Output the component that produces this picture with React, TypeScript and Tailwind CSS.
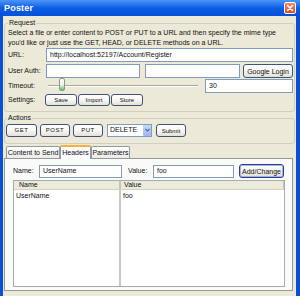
import React from "react";

const btn =
  "flex items-center justify-center border border-[#3D5378] rounded-[3px] bg-gradient-to-b from-white via-[#F7F6F2] to-[#E3E1D6] text-[#111] leading-none";
const input =
  "h-[14px] border border-[#7F9DB9] bg-white pl-[3px] flex items-center whitespace-nowrap overflow-hidden";

export default function App() {
  return (
    <div className="w-[300px] h-[296px] overflow-hidden bg-[#0A4FD4] flex flex-col font-['Liberation_Sans',Arial,sans-serif] text-[7px] leading-[10px] text-[#111]">
      {/* title bar */}
      <div className="h-[16px] shrink-0 flex items-center justify-between bg-gradient-to-b from-[#4A96F8] via-[#0C5DE4] to-[#0650D8] pl-[4px] pr-[4px]">
        <span className="text-white font-bold text-[9px] leading-[10px] tracking-[0.2px]">Poster</span>
        <div className="w-[12px] h-[12px] rounded-[2px] border border-white bg-gradient-to-b from-[#EE8A6A] to-[#D8441F] flex items-center justify-center">
          <svg width="8" height="8" viewBox="0 0 8 8">
            <path d="M1.5 1.5 L6.5 6.5 M6.5 1.5 L1.5 6.5" stroke="white" strokeWidth="1.6" strokeLinecap="round" />
          </svg>
        </div>
      </div>

      {/* body */}
      <div className="flex-1 ml-[3px] mr-[4px] bg-[#ECE9D8] flex flex-col px-[1px]">
        {/* Request group */}
        <fieldset className="mt-[2px] border border-[#D0D0BF] rounded-[3px] pl-[3px] pr-[1px] pb-[5px]">
          <legend className="px-[1px] leading-[10px]">Request</legend>
          <div className="h-[20px] whitespace-nowrap leading-[10px]">
            Select a file or enter content to POST or PUT to a URL and then specify the mime type
            <br />
            you'd like or just use the GET, HEAD, or DELETE methods on a URL.
          </div>
          <div className="flex items-center h-[14px]">
            <span className="w-[38px] shrink-0">URL:</span>
            <div className={`flex-1 ${input}`}>http://localhost:52197/Account/Register</div>
          </div>
          <div className="flex items-center h-[14px] mt-[2px]">
            <span className="w-[38px] shrink-0">User Auth:</span>
            <div className={`w-[94px] ${input}`}></div>
            <div className={`w-[95px] ml-[5px] ${input}`}></div>
            <div className={`${btn} flex-1 h-[14px] ml-[3px] text-[7px]`}>Google Login</div>
          </div>
          <div className="flex items-center h-[14px] mt-[1px]">
            <span className="w-[38px] shrink-0">Timeout:</span>
            <div className="relative w-[159px] h-[14px] flex items-center">
              <div className="ml-[2px] w-[150px] h-[2px] border-t border-[#A7A6A0] bg-white" />
              <div className="absolute left-[13px] top-[-1px] w-[6px] h-[13px] rounded-[2px] border border-[#8A9A8A] bg-gradient-to-b from-white via-[#F2F2EC] to-[#5FC05F]" />
            </div>
            <div className={`flex-1 ${input}`}>30</div>
          </div>
          <div className="flex items-center h-[12px] mt-[1px]">
            <span className="w-[37px] shrink-0">Settings:</span>
            <div className={`${btn} w-[32px] h-[12px] text-[6px]`}>Save</div>
            <div className={`${btn} w-[32px] h-[12px] ml-[1px] text-[6px]`}>Import</div>
            <div className={`${btn} w-[32px] h-[12px] ml-[1px] text-[6px]`}>Store</div>
          </div>
        </fieldset>

        {/* Actions group */}
        <fieldset className="mt-[1px] border border-[#D0D0BF] rounded-[3px] pl-[1px] pr-[1px] pb-[6px]">
          <legend className="ml-[1px] px-[1px] leading-[10px]">Actions</legend>
          <div className="flex items-center h-[14px]">
            <div className={`${btn} w-[31px] h-[13px] text-[6px] tracking-[0.5px]`}>GET</div>
            <div className={`${btn} w-[30px] h-[13px] ml-[3px] text-[6px] tracking-[0.5px]`}>POST</div>
            <div className={`${btn} w-[30px] h-[13px] ml-[3px] text-[6px] tracking-[0.5px]`}>PUT</div>
            <div className="w-[45px] h-[13px] ml-[4px] border border-[#7F9DB9] bg-white flex items-center">
              <span className="flex-1 pl-[2px] text-[7px]">DELETE</span>
              <div className="w-[8px] h-[11px] bg-gradient-to-b from-[#C6D6FC] to-[#9DB6F3] rounded-[1px] flex items-center justify-center">
                <svg width="5" height="4" viewBox="0 0 5 4">
                  <path d="M0.5 0.8 L2.5 3 L4.5 0.8" stroke="#4D6185" strokeWidth="1.1" fill="none" />
                </svg>
              </div>
            </div>
            <div className={`${btn} w-[30px] h-[13px] ml-[4px] mt-[1px] text-[6px]`}>Submit</div>
          </div>
        </fieldset>

        {/* Tabs */}
        <div className="flex items-end h-[14px] pl-[2px] mt-[0px]">
          <div className="w-[54px] h-[12px] border border-b-0 border-[#919B9C] rounded-t-[2px] bg-gradient-to-b from-white to-[#ECEBE6] flex items-center justify-center whitespace-nowrap">
            Content to Send
          </div>
          <div className="w-[31px] h-[14px] border-x border-[#919B9C] border-t-2 border-t-[#F5B435] rounded-t-[2px] bg-[#FCFCFE] flex items-center justify-center relative z-10 mb-[-1px]">
            Headers
          </div>
          <div className="w-[39px] h-[12px] border border-b-0 border-[#919B9C] rounded-t-[2px] bg-gradient-to-b from-white to-[#ECEBE6] flex items-center justify-center whitespace-nowrap">
            Parameters
          </div>
        </div>

        {/* Tab panel */}
        <div className="flex-1 mr-[2px] mb-[5px] border border-[#919B9C] bg-[#FAFAF8] pl-[8px] pt-[5px] pb-[3px] flex flex-col">
          <div className="flex items-center h-[14px]">
            <span className="w-[26px] shrink-0">Name:</span>
            <div className={`w-[83px] !h-[13px] ${input}`}>UserName</div>
            <span className="w-[25px] ml-[6px] shrink-0">Value:</span>
            <div className={`w-[81px] !h-[13px] ${input}`}>foo</div>
            <div className="ml-[5px] w-[45px] h-[14px] flex items-center justify-center border border-[#2B3F8E] rounded-[3px] bg-gradient-to-b from-white to-[#E3E1D6] shadow-[inset_0_0_0_1px_#9FB4E8] text-[7px] leading-none">
              Add/Change
            </div>
          </div>
          <div className="mt-[2px] w-[272px] flex-1 border border-[#A5ACB5] bg-white flex flex-col">
            <div className="h-[9px] flex bg-[#EBEADB] border-b border-[#D6D2C2]">
              <div className="w-[105px] pl-[5px] flex items-center">Name</div>
              <div className="w-[2px] bg-[#C7C5B2]" />
              <div className="flex-1 pl-[3px] flex items-center border-r border-[#C7C5B2]">Value</div>
            </div>
            <div className="flex-1 flex">
              <div className="w-[105px] pl-[2px] pt-[1px]">UserName</div>
              <div className="w-[2px] bg-[#C9C9C4]" />
              <div className="flex-1 pl-[2px] pt-[1px]">foo</div>
            </div>
          </div>
        </div>
      </div>
    </div>
  );
}
